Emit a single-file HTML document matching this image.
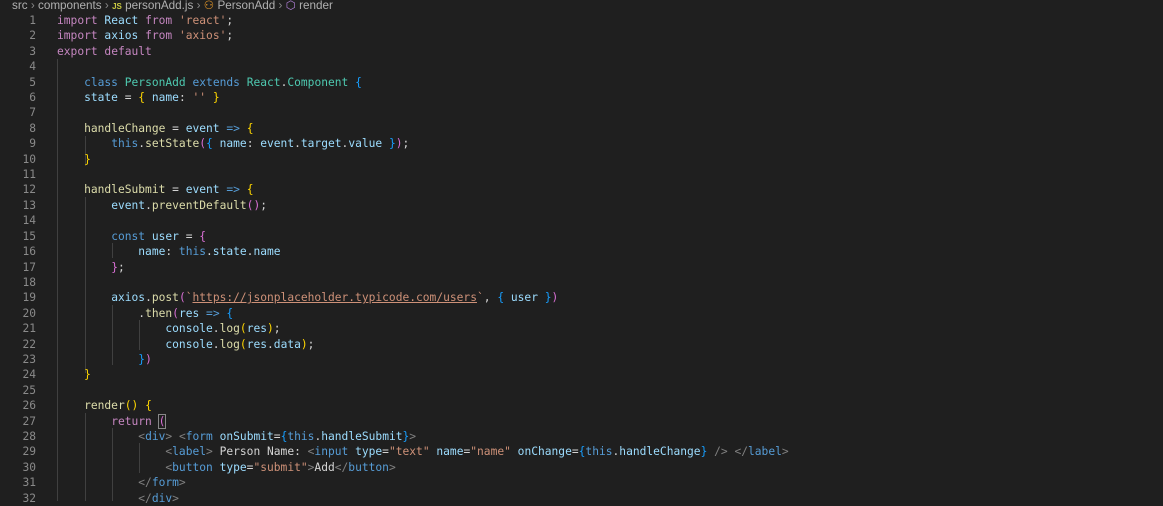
<!DOCTYPE html><html><head><style>
body{margin:0;width:1163px;height:501px;background:#1f1f1f;overflow:hidden;font-family:"DejaVu Sans Mono",monospace;}
.bc{position:absolute;top:0;left:12px;height:13px;font:11.7px "Liberation Sans",sans-serif;color:#b0b0b0;line-height:12px;white-space:nowrap}
.ln{position:absolute;left:0;width:36px;text-align:right;color:#8a8a8a;font-size:11.25px;line-height:15.4px;top:13px;white-space:pre}
.code{position:absolute;left:57px;top:13px;color:#d4d4d4;font-size:11.25px;line-height:15.4px;white-space:pre}
.g{position:absolute;width:1px;background:#404040}
.k{color:#c586c0}.b{color:#569cd6}.v{color:#9cdcfe}.t{color:#4ec9b0}.s{color:#ce9178}.f{color:#dcdcaa}.y{color:#ffd700}.m{color:#da70d6}.c{color:#179fff}.gr{color:#808080}
.u{text-decoration:underline;text-decoration-color:#ce9178}
</style></head><body>
<div class="bc">src <span style="color:#888">›</span> components <span style="color:#888">›</span> <span style="color:#cbcb41;font-weight:bold;font-size:8px">JS</span> personAdd.js <span style="color:#888">›</span> <span style="color:#ee9d28">⚇</span> PersonAdd <span style="color:#888">›</span> <span style="color:#b180d7">⬡</span> render</div>
<div class="g" style="left:57px;top:59px;height:442px"></div>
<div class="g" style="left:85px;top:136px;height:30px"></div>
<div class="g" style="left:85px;top:197px;height:176px"></div>
<div class="g" style="left:112px;top:243px;height:15px"></div>
<div class="g" style="left:112px;top:305px;height:60px"></div>
<div class="g" style="left:139px;top:320px;height:30px"></div>
<div class="g" style="left:85px;top:413px;height:88px"></div>
<div class="g" style="left:112px;top:428px;height:73px"></div>
<div class="g" style="left:139px;top:443px;height:30px"></div>
<div class="ln">1
2
3
4
5
6
7
8
9
10
11
12
13
14
15
16
17
18
19
20
21
22
23
24
25
26
27
28
29
30
31
32</div>
<div class="code"><span class="k">import</span> <span class="v">React</span> <span class="k">from</span> <span class="s">'react'</span>;
<span class="k">import</span> <span class="v">axios</span> <span class="k">from</span> <span class="s">'axios'</span>;
<span class="k">export</span> <span class="k">default</span>

    <span class="b">class</span> <span class="t">PersonAdd</span> <span class="b">extends</span> <span class="t">React</span>.<span class="t">Component</span> <span class="c">{</span>
    <span class="v">state</span> = <span class="y">{</span> <span class="v">name</span>: <span class="s">''</span> <span class="y">}</span>

    <span class="f">handleChange</span> = <span class="v">event</span> <span class="b">=&gt;</span> <span class="y">{</span>
        <span class="b">this</span>.<span class="f">setState</span><span class="m">(</span><span class="c">{</span> <span class="v">name</span>: <span class="v">event</span>.<span class="v">target</span>.<span class="v">value</span> <span class="c">}</span><span class="m">)</span>;
    <span class="y">}</span>

    <span class="f">handleSubmit</span> = <span class="v">event</span> <span class="b">=&gt;</span> <span class="y">{</span>
        <span class="v">event</span>.<span class="f">preventDefault</span><span class="m">()</span>;

        <span class="b">const</span> <span class="v">user</span> = <span class="m">{</span>
            <span class="v">name</span>: <span class="b">this</span>.<span class="v">state</span>.<span class="v">name</span>
        <span class="m">}</span>;

        <span class="v">axios</span>.<span class="f">post</span><span class="m">(</span><span class="s">`<span class="u">https://jsonplaceholder.typicode.com/users</span>`</span>, <span class="c">{</span> <span class="v">user</span> <span class="c">}</span><span class="m">)</span>
            .<span class="f">then</span><span class="m">(</span><span class="v">res</span> <span class="b">=&gt;</span> <span class="c">{</span>
                <span class="v">console</span>.<span class="f">log</span><span class="y">(</span><span class="v">res</span><span class="y">)</span>;
                <span class="v">console</span>.<span class="f">log</span><span class="y">(</span><span class="v">res</span>.<span class="v">data</span><span class="y">)</span>;
            <span class="c">}</span><span class="m">)</span>
    <span class="y">}</span>

    <span class="f">render</span><span class="y">()</span> <span class="y">{</span>
        <span class="k">return</span> <span class="m" style="outline:1px solid #888">(</span>
            <span class="gr">&lt;</span><span class="b">div</span><span class="gr">&gt;</span> <span class="gr">&lt;</span><span class="b">form</span> <span class="v">onSubmit</span>=<span class="c">{</span><span class="b">this</span>.<span class="v">handleSubmit</span><span class="c">}</span><span class="gr">&gt;</span>
                <span class="gr">&lt;</span><span class="b">label</span><span class="gr">&gt;</span> Person Name: <span class="gr">&lt;</span><span class="b">input</span> <span class="v">type</span>=<span class="s">"text"</span> <span class="v">name</span>=<span class="s">"name"</span> <span class="v">onChange</span>=<span class="c">{</span><span class="b">this</span>.<span class="v">handleChange</span><span class="c">}</span> <span class="gr">/&gt;</span> <span class="gr">&lt;/</span><span class="b">label</span><span class="gr">&gt;</span>
                <span class="gr">&lt;</span><span class="b">button</span> <span class="v">type</span>=<span class="s">"submit"</span><span class="gr">&gt;</span>Add<span class="gr">&lt;/</span><span class="b">button</span><span class="gr">&gt;</span>
            <span class="gr">&lt;/</span><span class="b">form</span><span class="gr">&gt;</span>
            <span class="gr">&lt;/</span><span class="b">div</span><span class="gr">&gt;</span></div>
</body></html>
